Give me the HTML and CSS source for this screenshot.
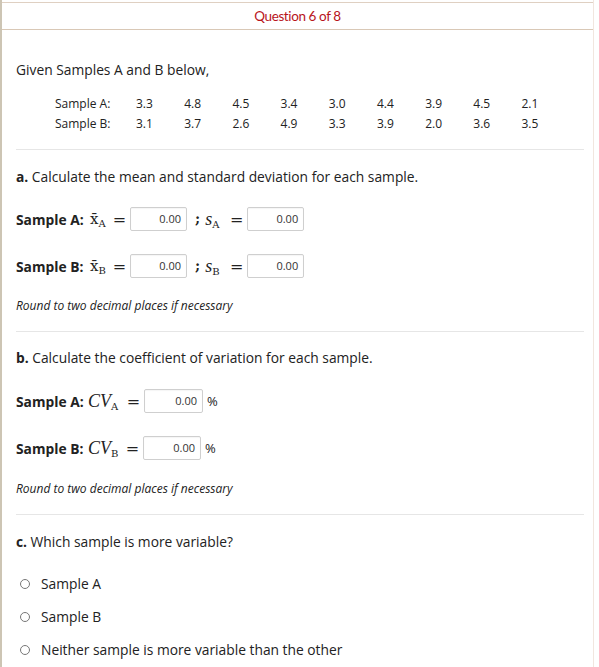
FILE: index.html
```html
<!DOCTYPE html>
<html>
<head>
<meta charset="utf-8">
<link rel="stylesheet" href="styles.css">
</head>
<body>
<div class="page">
  <header class="qhead">Question 6 of 8</header>
  <main class="content">
    <p class="intro">Given Samples A and B below,</p>
    <div class="data">
      <span class="lbl">Sample A:</span><span>3.3</span><span>4.8</span><span>4.5</span><span>3.4</span><span>3.0</span><span>4.4</span><span>3.9</span><span>4.5</span><span>2.1</span>
      <span class="lbl">Sample B:</span><span>3.1</span><span>3.7</span><span>2.6</span><span>4.9</span><span>3.3</span><span>3.9</span><span>2.0</span><span>3.6</span><span>3.5</span>
    </div>
    <hr class="sep sep1">
    <p class="part"><b>a.</b> Calculate the mean and standard deviation for each sample.</p>
    <div class="row rowa1">
      <b class="slbl">Sample A:</b>
      <span class="math xbar">x̄<sub>A</sub></span>
      <span class="math eq">=</span>
      <span class="box">0.00</span>
      <span class="math semi">;</span>
      <span class="math sv"><i>s</i><sub>A</sub></span>
      <span class="math eq">=</span>
      <span class="box">0.00</span>
    </div>
    <div class="row rowa2">
      <b class="slbl">Sample B:</b>
      <span class="math xbar">x̄<sub>B</sub></span>
      <span class="math eq">=</span>
      <span class="box">0.00</span>
      <span class="math semi">;</span>
      <span class="math sv"><i>s</i><sub>B</sub></span>
      <span class="math eq">=</span>
      <span class="box">0.00</span>
    </div>
    <p class="note note1">Round to two decimal places if necessary</p>
    <hr class="sep sep2">
    <p class="part partb"><b>b.</b> Calculate the coefficient of variation for each sample.</p>
    <div class="row rowb1">
      <b class="slbl">Sample A:</b>
      <span class="math cv"><i>CV</i><sub>A</sub></span>
      <span class="math eq">=</span>
      <span class="box">0.00</span>
      <span class="pct">%</span>
    </div>
    <div class="row rowb2">
      <b class="slbl">Sample B:</b>
      <span class="math cv"><i>CV</i><sub>B</sub></span>
      <span class="math eq">=</span>
      <span class="box">0.00</span>
      <span class="pct">%</span>
    </div>
    <p class="note note2">Round to two decimal places if necessary</p>
    <hr class="sep sep3">
    <p class="part partc"><b>c.</b> Which sample is more variable?</p>
    <ul class="opts">
      <li><span class="radio"></span>Sample A</li>
      <li><span class="radio"></span>Sample B</li>
      <li><span class="radio"></span>Neither sample is more variable than the other</li>
    </ul>
  </main>
</div>
</body>
</html>
```
FILE: styles.css
```css
html, body {
  margin: 0;
  padding: 0;
  background: #fff;
}
body {
  font-family: "Open Sans", "DejaVu Sans", sans-serif;
  color: #222;
  font-size: 13.8px;
}
.page {
  width: 594px;
  height: 667px;
  border-left: 2px solid #cdc5b4;
  border-right: 1px solid #f1e6df;
  box-sizing: border-box;
  overflow: hidden;
}
.qhead {
  margin-top: 2px;
  height: 28px;
  border-top: 1px solid #dfd0c2;
  border-bottom: 1px solid #d9c8b6;
  box-sizing: border-box;
  text-align: center;
  font-family: "Lato", "Open Sans", sans-serif;
  font-size: 13.5px;
  line-height: 27px;
  color: #b8141b;
  letter-spacing: -0.4px;
}
.content {
  padding: 0 14px;
}
p { margin: 0; }
.intro {
  margin-top: 30px;
  line-height: 20px;
}
.data {
  margin-top: 14px;
  padding-left: 39px;
  display: grid;
  grid-template-columns: 81px repeat(9, 48.2px);
  grid-auto-rows: 20px;
  font-size: 12px;
  line-height: 20px;
}
.sep {
  border: 0;
  border-top: 1px solid #e6e6e6;
  margin: 0;
  width: 568px;
}
.sep1 { margin-top: 15px; }
.part {
  line-height: 20px;
  margin-top: 17px;
}
.row {
  display: flex;
  align-items: center;
  height: 24px;
  white-space: nowrap;
}
.row > * { flex-shrink: 0; }
.rowa1 { margin-top: 20px; }
.rowa2 { margin-top: 23px; }
.slbl {
  font-weight: 700;
  width: 69px;
}
.math {
  font-family: "DejaVu Serif", "Liberation Serif", serif;
  font-size: 15px;
  color: #222;
}
.math sub {
  font-size: 10px;
  vertical-align: -3px;
}
.xbar {
  margin-left: 5px;
  width: 22px;
}
.eq {
  width: 15px;
  text-align: center;
  font-size: 16px;
  margin-right: 3px;
}
.semi {
  margin-left: 8px;
  margin-right: 5px;
  font-weight: 700;
  font-size: 14px;
}
.sv {
  width: 24px;
}
.sv i, .cv i {
  font-family: "Liberation Serif", serif;
  font-size: 18px;
}
.box {
  width: 57px;
  height: 24px;
  box-sizing: border-box;
  border: 1px solid #cfcfcf;
  border-radius: 2px;
  text-align: right;
  padding-right: 5px;
  font-size: 11px;
  line-height: 22px;
  color: #333;
  box-shadow: inset 0 1px 1px rgba(0,0,0,0.04);
}
.note {
  font-style: italic;
  font-size: 12px;
  line-height: 18px;
  color: #222;
}
.note1 { margin-top: 19px; }
.sep2 { margin-top: 16px; }
.partb { margin-top: 16px; }
.rowb1 { margin-top: 21px; }
.rowb2 { margin-top: 23px; }
.cv {
  margin-left: 3px;
  width: 38px;
}
.rowb2 .cv { width: 37px; }
.rowb1 .box { width: 59px; }
.rowb2 .box { width: 58px; }
.pct {
  margin-left: 4px;
  font-size: 13px;
}
.note2 { margin-top: 20px; }
.sep3 { margin-top: 16px; }
.partc { margin-top: 17px; }
.opts {
  list-style: none;
  margin: 22px 0 0 0;
  padding: 0;
}
.opts li {
  display: flex;
  align-items: center;
  line-height: 20px;
  height: 20px;
  margin-bottom: 13px;
}
.radio {
  width: 10px;
  height: 10px;
  border: 1px solid #777;
  border-radius: 50%;
  box-sizing: border-box;
  margin-left: 4px;
  margin-right: 11px;
}
```
